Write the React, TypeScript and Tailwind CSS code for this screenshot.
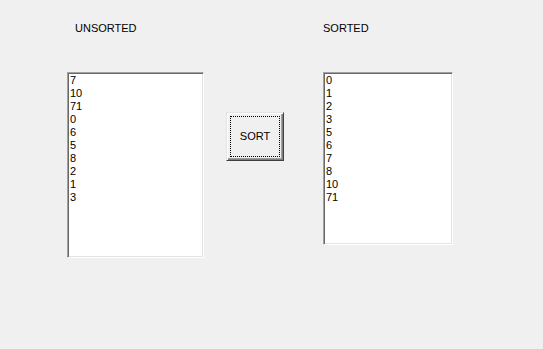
const unsorted = [7, 10, 71, 0, 6, 5, 8, 2, 1, 3];
const sorted = [...unsorted].sort((a, b) => a - b);

function ListBox({ items, className }: { items: number[]; className: string }) {
  return (
    <div
      className={`border border-[#a0a0a0] border-r-white border-b-white bg-white shadow-[inset_1px_1px_0_#696969,inset_-1px_-1px_0_#e3e3e3] pl-[2px] pt-[1px] ${className}`}
    >
      {items.map((n, i) => (
        <div key={i} className="h-[13px] leading-[13px]">
          {n}
        </div>
      ))}
    </div>
  );
}

export default function App() {
  return (
    <div
      className="flex h-[349px] w-[543px] items-start bg-[#f0f0f0] pl-[67px] text-[11px] text-black"
      style={{ fontFamily: '"Liberation Sans", Arial, sans-serif' }}
    >
      <div className="flex flex-col">
        <div className="mt-[22px] ml-[8px] h-[13px] leading-[13px]">UNSORTED</div>
        <ListBox items={unsorted} className="mt-[37px] h-[186px] w-[137px]" />
      </div>

      <button className="mt-[112px] ml-[22px] flex h-[49px] w-[58px] items-center justify-center border border-[#e3e3e3] border-r-[#404040] border-b-[#404040] bg-[#f0f0f0] p-[3px] shadow-[inset_1px_1px_0_#ffffff,inset_-1px_-1px_0_#808080,inset_-2px_-2px_0_#a0a0a0]">
        <span className="flex h-full w-full items-center justify-center border border-dotted border-black text-[11px] leading-[13px]">
          SORT
        </span>
      </button>

      <div className="ml-[39px] flex flex-col">
        <div className="mt-[22px] h-[13px] leading-[13px]">SORTED</div>
        <ListBox items={sorted} className="mt-[37px] h-[173px] w-[130px]" />
      </div>
    </div>
  );
}
